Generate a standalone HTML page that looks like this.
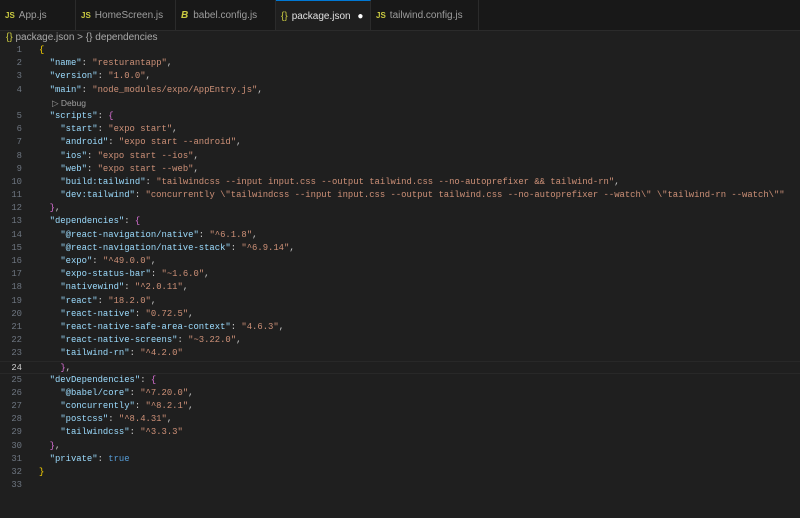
<!DOCTYPE html>
<html><head><meta charset="utf-8"><style>
body{margin:0;width:800px;height:518px;background:#1f1f1f;overflow:hidden;font-family:"Liberation Sans",sans-serif}
.tabs{height:30px;background:#181818;position:relative;border-bottom:1px solid #2b2b2b}
.tab{position:absolute;top:0;height:30px;line-height:32px;font-size:10px;color:#9d9d9d;background:#181818;border-right:1px solid #2b2b2b;box-sizing:border-box;padding-left:5px}
.tab.act{background:#1f1f1f;color:#e0e0e0;border-top:1px solid #0078d4}
.js{color:#cbcb41;font-weight:bold;font-size:8px;margin-right:4px}
.bc{height:14px;font-size:10px;color:#a9a9a9;padding-left:6px;line-height:12px;margin-top:1px}
.code{position:absolute;top:44px;left:0;width:800px;font-family:"Liberation Mono",monospace;font-size:8.9px}
.l{height:13.2px;line-height:13.2px;position:relative}
.n{position:absolute;left:0;width:22px;text-align:right;color:#6e7681}
.t{position:absolute;left:39px;white-space:pre}
.k{color:#9cdcfe}.s{color:#ce9178}.p{color:#cccccc}.y{color:#ffd700}.m{color:#da70d6}.b{color:#179fff}.kw{color:#569cd6}
.cur{border-top:1px solid #282828;border-bottom:1px solid #282828;box-sizing:border-box}
</style></head><body>
<div class="tabs">
<div class="tab" style="left:0;width:76px"><span class="js">JS</span>App.js</div>
<div class="tab" style="left:76px;width:100px"><span class="js">JS</span>HomeScreen.js</div>
<div class="tab" style="left:176px;width:100px"><span style="color:#cbcb41;font-style:italic;font-weight:bold;margin-right:5px">B</span>babel.config.js</div>
<div class="tab act" style="left:276px;width:95px"><span style="color:#cbcb41;margin-right:4px">{}</span>package.json <span style="color:#fff;margin-left:4px">●</span></div>
<div class="tab" style="left:371px;width:108px"><span class="js">JS</span>tailwind.config.js</div>
</div>
<div class="bc"><span style="color:#cbcb41">{}</span> package.json &gt; {} dependencies</div>
<div class="code">
<div class="l"><span class="n">1</span><span class="t"><span class="y">{</span></span></div>
<div class="l"><span class="n">2</span><span class="t">  <span class="k">"name"</span><span class="p">: </span><span class="s">"resturantapp"</span><span class="p">,</span></span></div>
<div class="l"><span class="n">3</span><span class="t">  <span class="k">"version"</span><span class="p">: </span><span class="s">"1.0.0"</span><span class="p">,</span></span></div>
<div class="l"><span class="n">4</span><span class="t">  <span class="k">"main"</span><span class="p">: </span><span class="s">"node_modules/expo/AppEntry.js"</span><span class="p">,</span></span></div>
<div class="l"><span class="t" style="font-family:'Liberation Sans',sans-serif;font-size:8.5px;color:#a0a0a0;left:52px">▷ Debug</span></div>
<div class="l"><span class="n">5</span><span class="t">  <span class="k">"scripts"</span><span class="p">: </span><span class="m">{</span></span></div>
<div class="l"><span class="n">6</span><span class="t">    <span class="k">"start"</span><span class="p">: </span><span class="s">"expo start"</span><span class="p">,</span></span></div>
<div class="l"><span class="n">7</span><span class="t">    <span class="k">"android"</span><span class="p">: </span><span class="s">"expo start --android"</span><span class="p">,</span></span></div>
<div class="l"><span class="n">8</span><span class="t">    <span class="k">"ios"</span><span class="p">: </span><span class="s">"expo start --ios"</span><span class="p">,</span></span></div>
<div class="l"><span class="n">9</span><span class="t">    <span class="k">"web"</span><span class="p">: </span><span class="s">"expo start --web"</span><span class="p">,</span></span></div>
<div class="l"><span class="n">10</span><span class="t">    <span class="k">"build:tailwind"</span><span class="p">: </span><span class="s">"tailwindcss --input input.css --output tailwind.css --no-autoprefixer &amp;&amp; tailwind-rn"</span><span class="p">,</span></span></div>
<div class="l"><span class="n">11</span><span class="t">    <span class="k">"dev:tailwind"</span><span class="p">: </span><span class="s">"concurrently \"tailwindcss --input input.css --output tailwind.css --no-autoprefixer --watch\" \"tailwind-rn --watch\""</span></span></div>
<div class="l"><span class="n">12</span><span class="t">  <span class="m">}</span><span class="p">,</span></span></div>
<div class="l"><span class="n">13</span><span class="t">  <span class="k">"dependencies"</span><span class="p">: </span><span class="m">{</span></span></div>
<div class="l"><span class="n">14</span><span class="t">    <span class="k">"@react-navigation/native"</span><span class="p">: </span><span class="s">"^6.1.8"</span><span class="p">,</span></span></div>
<div class="l"><span class="n">15</span><span class="t">    <span class="k">"@react-navigation/native-stack"</span><span class="p">: </span><span class="s">"^6.9.14"</span><span class="p">,</span></span></div>
<div class="l"><span class="n">16</span><span class="t">    <span class="k">"expo"</span><span class="p">: </span><span class="s">"^49.0.0"</span><span class="p">,</span></span></div>
<div class="l"><span class="n">17</span><span class="t">    <span class="k">"expo-status-bar"</span><span class="p">: </span><span class="s">"~1.6.0"</span><span class="p">,</span></span></div>
<div class="l"><span class="n">18</span><span class="t">    <span class="k">"nativewind"</span><span class="p">: </span><span class="s">"^2.0.11"</span><span class="p">,</span></span></div>
<div class="l"><span class="n">19</span><span class="t">    <span class="k">"react"</span><span class="p">: </span><span class="s">"18.2.0"</span><span class="p">,</span></span></div>
<div class="l"><span class="n">20</span><span class="t">    <span class="k">"react-native"</span><span class="p">: </span><span class="s">"0.72.5"</span><span class="p">,</span></span></div>
<div class="l"><span class="n">21</span><span class="t">    <span class="k">"react-native-safe-area-context"</span><span class="p">: </span><span class="s">"4.6.3"</span><span class="p">,</span></span></div>
<div class="l"><span class="n">22</span><span class="t">    <span class="k">"react-native-screens"</span><span class="p">: </span><span class="s">"~3.22.0"</span><span class="p">,</span></span></div>
<div class="l"><span class="n">23</span><span class="t">    <span class="k">"tailwind-rn"</span><span class="p">: </span><span class="s">"^4.2.0"</span></span></div>
<div class="l cur"><span class="n" style="color:#cccccc">24</span><span class="t">    <span class="m">}</span><span class="p">,</span></span></div>
<div class="l"><span class="n">25</span><span class="t">  <span class="k">"devDependencies"</span><span class="p">: </span><span class="m">{</span></span></div>
<div class="l"><span class="n">26</span><span class="t">    <span class="k">"@babel/core"</span><span class="p">: </span><span class="s">"^7.20.0"</span><span class="p">,</span></span></div>
<div class="l"><span class="n">27</span><span class="t">    <span class="k">"concurrently"</span><span class="p">: </span><span class="s">"^8.2.1"</span><span class="p">,</span></span></div>
<div class="l"><span class="n">28</span><span class="t">    <span class="k">"postcss"</span><span class="p">: </span><span class="s">"^8.4.31"</span><span class="p">,</span></span></div>
<div class="l"><span class="n">29</span><span class="t">    <span class="k">"tailwindcss"</span><span class="p">: </span><span class="s">"^3.3.3"</span></span></div>
<div class="l"><span class="n">30</span><span class="t">  <span class="m">}</span><span class="p">,</span></span></div>
<div class="l"><span class="n">31</span><span class="t">  <span class="k">"private"</span><span class="p">: </span><span class="kw">true</span></span></div>
<div class="l"><span class="n">32</span><span class="t"><span class="y">}</span></span></div>
<div class="l"><span class="n">33</span><span class="t"></span></div>
</div>
</body></html>
